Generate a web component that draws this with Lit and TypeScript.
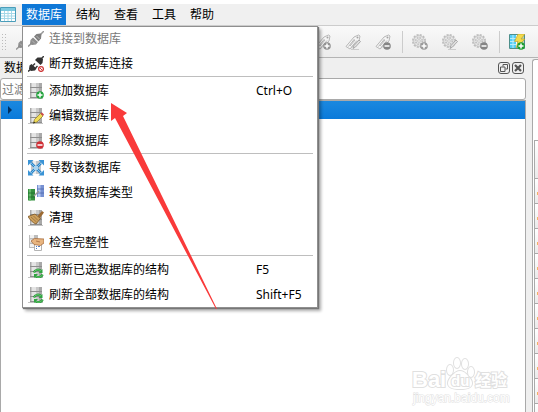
import { LitElement, html, svg, css, nothing } from "lit";
import { customElement, property } from "lit/decorators.js";

const rack = svg`
  <path d="M0 15.5h15" stroke="#c4c4c4"/>
  <path d="M2 0h12v15H2z" fill="#9a9a9a"/>
  <path d="M2 0h12v4H2zM2 5h12v4H2zM2 10h12v4H2z" fill="#a9a9a9"/>
  <path d="M3 0h8v4H3zM3 5h8v4H3zM3 10h8v4H3z" fill="#c8c8c8"/>
  <path d="M4 0h4v4H4zM4 5h4v4H4zM4 10h4v4H4z" fill="#e4e4e4"/>
  <path d="M2 4.5h12M2 9.5h12M2 14.5h12" stroke="#8e8e8e"/>`;
const badge = (fill: string, plus: boolean) => svg`
  <circle cx="12" cy="12" r="3.8" fill=${fill}/>
  <path d=${plus ? "M9.5 12h5M12 9.5v5" : "M9.5 12h5"} stroke="#fff" stroke-width="1.5"/>`;
const pencil = svg`
  <path d="M5.5 15l1-3.5 6-6 2.5 2.5-6 6z" fill="#f0dd58" stroke="#8d7526" stroke-width=".7"/>
  <path d="M12.5 5.5L15 8l1-1.5-2-2z" fill="#d04a4a"/><path d="M5 15.5l1-2 1.2 1.2z" fill="#222"/>`;
const refresh = svg`
  <path d="M6 10.5c1-3 5-3.500 7-1.500M14.500 12.5c-1 3-5 3.500-7 1.500" fill="none" stroke="#27923a" stroke-width="2.4"/>
  <path d="M6 10.5c1-3 5-3.500 7-1.500M14.500 12.5c-1 3-5 3.500-7 1.500" fill="none" stroke="#6ed873"/>
  <path d="M14.5 7v4H10.500zM6 16v-4h4z" fill="#2fa540"/>`;
const tag = svg`
  <path d="M1 12.5L9 3l4.5-2L15 2l-1 5-9 8z" fill="#f4f4f4" stroke="#b8b8b8"/>
  <path d="M3.5 12.5l6-7.5M6 13.5l6-7M5 12l5-6" stroke="#b8b8b8" fill="none"/>
  <circle cx="12.5" cy="3.5" r="1" fill="#a2a2a2"/>`;
const gear = svg`
  <circle cx="7" cy="7" r="6" fill="none" stroke="#bcbcbc" stroke-width="2" stroke-dasharray="2 1.14"/>
  <circle cx="7" cy="7" r="5.3" fill="#e6e6e6" stroke="#c4c4c4" stroke-width=".8"/>
  <circle cx="7" cy="7" r="3.3" fill="none" stroke="#bdbdbd" stroke-width="1.5" stroke-dasharray="1.5 1.1"/>
  <circle cx="7" cy="7" r="1.3" fill="#fff" stroke="#aaa" stroke-width=".6"/>`;
const grayPencil = svg`<path d="M6 15.5h8" stroke="#ccc"/>
  <path d="M8 14.5l1-3 5-5.5 1.5 1.5-5 5.5z" fill="#e2e2e2" stroke="#9a9a9a" stroke-width=".8"/>`;

const icons = {
  table: svg`<path d="M.5 .5h15v14H.5z" fill="#fff" stroke="#4a9dba"/><path d="M1 1h14v3H1z" fill="#7cc9e0"/>
    <path d="M1 6.500h14M1 9h14M1 11.500h14M4.500 4V14M8 4V14M11.500 4V14" stroke="#a5d8e8"/>`,
  plug: svg`<path d="M0 15.5l4-3.5M12 4l4-4" stroke="#999" stroke-width="1.5"/>
    <path d="M2 13l.5-4L5 6.5 10 11l-2 2.5-4 .5z" fill="#8d8d8d"/>
    <path d="M6 5.5L8.5 3l4-.5 1 1-.5 4-2.5 3z" fill="#7f7f7f"/>
    <path d="M4 9.5l3 3M8.5 5l3 3" stroke="#b5b5b5"/>`,
  unplug: svg`<path d="M0 15.5l3-2.500M13 3l3-3" stroke="#3a3a3a" stroke-width="1.5"/>
    <path d="M1 13l.5-3.500L3.500 8l5 4.500L7 14.5l-4 .5z" fill="#333"/>
    <path d="M7 4l2.500-2.500H13L15 3l-.5 4-2 2z" fill="#333"/>
    <path d="M5 9.5l2-2M7.5 12l2-2" stroke="#333" stroke-width="1.4"/>
    <circle cx="13" cy="13" r="2.4" fill="#fff" stroke="#cf3b3b" stroke-width="1.3"/><path d="M11.5 11.5l3 3" stroke="#cf3b3b"/>`,
  add: svg`${rack}${badge("#22a33c", true)}`,
  edit: svg`${rack}${pencil}`,
  remove: svg`${rack}${badge("#cf2f35", false)}`,
  exportDb: svg`<path d="M3 1h10v13H3z" fill="#c3c7cb"/><path d="M5 1h3v13H5z" fill="#ececec"/>
    <path d="M3 3l10 10M13 3L3 13" stroke="#2f86c6" stroke-width="2.5"/><path d="M3 3l10 10M13 3L3 13" stroke="#7cc0ee"/>
    <path d="M0 0h5.5L0 5.5zM16 0v5.5L10.5 0zM0 15.5V10l5.5 5.5zM16 15.5h-5.5L16 10z" fill="#3a94d6"/>
    <path d="M6 6h4v4H6z" fill="#a8d5f2"/>`,
  convert: svg`<path d="M0 4h7v11.5H0z" fill="#35913f"/><path d="M1 4h2v11.5H1z" fill="#62b869"/><path d="M0 8h7M0 12h7" stroke="#1f6a2b" stroke-width=".8"/>
    <path d="M9 0h7v12H9z" fill="#7791d2"/><path d="M10 0h2.5v12H10z" fill="#b6c7f0"/><path d="M9 4h7M9 8h7" stroke="#4d68ac" stroke-width=".8"/>
    <path d="M6 11l5-5" stroke="#999" stroke-width="1.5"/>`,
  clean: svg`${rack}<path d="M9.5 6l4.500-5 2 1.500L12 8z" fill="#9c6a32"/><path d="M0 6.5l7-2.500 5.500 4.500L8 14C5 13 2 10 0 6.500z" fill="#cda05c" stroke="#7b5527" stroke-width=".8"/>
    <path d="M3 7l5.5 5M5.5 6l4.500 4.500" stroke="#8d6636" stroke-width=".7"/>`,
  check: svg`<path d="M1 0h9v13H1z" fill="#bcbcbc"/><path d="M2 0h4v3H2zM2 4.5h4v3H2zM2 9h4v3H2z" fill="#f2f2f2"/>
    <path d="M6.5 7.5h7v8h-7z" fill="#fff" stroke="#b4b4b4"/><path d="M8 11.5h1M8 13.5h1M10 11.5h2" stroke="#557dc2"/>
    <path d="M3 6l3.500-2.500L16 4v4l-3.500 2.500L6 9.500z" fill="#e8b580" stroke="#a66c3d" stroke-width=".8"/>
    <path d="M8 6l4 1" stroke="#a66c3d" stroke-width=".8"/>`,
  refresh: svg`${rack}${refresh}`,
  tagAdd: svg`${tag}${badge("#929292", true)}`,
  tagEdit: svg`${tag}${grayPencil}`,
  tagRemove: svg`${tag}${badge("#858585", false)}`,
  gearAdd: svg`${gear}${badge("#9a9a9a", true)}`,
  gearEdit: svg`${gear}${grayPencil}`,
  gearRemove: svg`${gear}${badge("#858585", false)}`,
  tableAdd: svg`<path d="M.5 .5h15v14H.5z" fill="#fff" stroke="#4d8f8b"/><path d="M1 1h6v13H1z" fill="#55cdf5"/>
    <path d="M1 4.5h6M1 7.5h6M1 10.5h6M4 1v13" stroke="#b8ecfc"/><path d="M8 1h7v13H8z" fill="#b9d3b0"/>
    <path d="M9 0h7l-4 5h4l-9 9 2-6.500H5.500z" fill="#f4da4a" stroke="#b39b2a" stroke-width=".6"/>
    ${badge("#1d9e2f", true)}`,
};
type IconName = keyof typeof icons;
const icon = (name: IconName) =>
  html`<svg class="icon" viewBox="0 0 16 16" aria-hidden="true">${icons[name]}</svg>`;

type Tool = [IconName, string];
const tagTools: Tool[] = [["tagAdd", "添加"], ["tagEdit", "编辑"], ["tagRemove", "移除"]];
const gearTools: Tool[] = [["gearAdd", "添加"], ["gearEdit", "编辑"], ["gearRemove", "移除"]];
const tool = ([name, label]: Tool) => html`<button aria-label=${label}>${icon(name)}</button>`;

type Entry = { icon: IconName; label: string; key?: string; disabled?: boolean } | null;
const entries: Entry[] = [
  { icon: "plug", label: "连接到数据库", disabled: true },
  { icon: "unplug", label: "断开数据库连接" },
  null,
  { icon: "add", label: "添加数据库", key: "Ctrl+O" },
  { icon: "edit", label: "编辑数据库" },
  { icon: "remove", label: "移除数据库" },
  null,
  { icon: "exportDb", label: "导数该数据库" },
  { icon: "convert", label: "转换数据库类型" },
  { icon: "clean", label: "清理" },
  { icon: "check", label: "检查完整性" },
  null,
  { icon: "refresh", label: "刷新已选数据库的结构", key: "F5" },
  { icon: "refresh", label: "刷新全部数据库的结构", key: "Shift+F5" },
];

const shared = css`
  * { box-sizing: border-box; }
  button { font: inherit; color: inherit; border: 0; padding: 0; background: none; }
  .icon { width: 16px; height: 16px; flex: none; display: block; }
`;

@customElement("drop-menu")
export class DropMenu extends LitElement {
  @property({ attribute: false }) entries: Entry[] = [];
  static styles = [shared, css`
    :host { display: block; background: #fff; border: 1px solid #8f8f8f; border-top: 0;
      box-shadow: inset 0 1px #8f8f8f, 1px 1px 1px #777, 3px 3px 3px #0005; }
    .item { display: grid; grid-template-columns: 16px 1fr 58px; column-gap: 5px; align-items: center;
      width: 100%; height: 25px; padding: 0 3px 0 5px; text-align: left; white-space: nowrap; }
    .item:disabled { color: #787878; }
    hr { margin: 0 4px 1px; border: 0; height: 1px; background: #bebebe; }
  `];
  render() {
    return html`<div role="menu">${this.entries.map((e) => e
      ? html`<button class="item" role="menuitem" ?disabled=${e.disabled}>
          ${icon(e.icon)}<span>${e.label}</span>${e.key ? html`<span>${e.key}</span>` : nothing}
        </button>`
      : html`<hr>`)}</div>`;
  }
}

@customElement("app-root")
export class AppRoot extends LitElement {
  static styles = [shared, css`
    :host { display: flex; flex-direction: column; position: relative; min-height: 100vh; overflow: hidden;
      padding-top: 4px; background: #fff; color: #000; font: 12px/16px "Noto Sans", "Noto Sans CJK SC", sans-serif; }
    .menubar { display: flex; align-items: center; height: 22px; background: #f0f0f0; border-bottom: 1px solid #ccc; }
    .menubar .icon { margin-right: 6px; }
    .menu { height: 100%; padding: 0 4px; margin-right: 6px; }
    .open { background: #0f78d7; color: #fff; }
    .toolbar { display: flex; align-items: center; height: 32px; background: linear-gradient(#f9f9f9, #ececec);
      border-bottom: 1px solid #b4b4b4; }
    .grip { width: 5px; height: 18px; margin: 0 10px 0 1px; background: radial-gradient(circle, #bbb 1px, transparent 1px) 0 0 / 3px 3px; }
    .tools { display: flex; gap: 14px; }
    .tools.far { margin-left: 283px; }
    .rule { width: 1px; height: 22px; margin: 0 9px 0 11px; background: #ccc; }
    .body { flex: 1; display: flex; background: #efefef; }
    .dock { flex: 1; min-width: 0; display: flex; flex-direction: column; }
    .title { display: flex; align-items: center; height: 20px; padding: 0 2px 0 4px; gap: 2px; }
    .title span { flex: 1; }
    .tiny, .tiny svg { display: block; width: 12px; height: 12px; }
    .filter { width: 100%; height: 22px; padding: 0 1px; border: 1px solid #a9a9a9; border-radius: 3px;
      font: inherit; color: #777; background: #fff; outline: 0; }
    .filter::placeholder { color: #777; opacity: 1; }
    .tree { flex: 1; background: #fff; border: 1px solid #a9a9a9; border-bottom: 0; }
    .row { height: 18px; background: linear-gradient(#1b88df, #0a7ada); padding: 4px 6px; }
    .row svg { display: block; width: 6px; height: 10px; }
    .side { contain: size; width: 6px; margin: 1px 0 0 6px; background: #fff; border: solid #a9a9a9; border-width: 1px 0 0 1px;
      border-radius: 3px 0 0 0; padding: 80px 0 0 1px; overflow: hidden; }
    .cell { height: 25px; border: solid #aaa; border-width: 1px 0 0 1px; background: linear-gradient(#fff, #eaeaea); }
    .cell.tall { height: 38px; }
    .cell i { display: block; width: 1px; height: 3px; margin: 13px 0 0 auto; background: #f2b366; }
    drop-menu { position: absolute; left: 22px; top: 26px; width: 296px; }
    .arrow { position: absolute; left: 100px; top: 95px; width: 120px; height: 216px; pointer-events: none; }
    .mark { position: absolute; right: 26px; bottom: 8px; width: 102px; height: 54px; pointer-events: none; }
    .mark text { font-family: "Liberation Sans", "Noto Sans CJK SC", sans-serif; }
  `];
  render() {
    return html`
      <nav class="menubar">
        ${icon("table")}
        ${["数据库", "结构", "查看", "工具", "帮助"].map((m, i) =>
          html`<button class="menu ${i ? "" : "open"}">${m}</button>`)}
      </nav>
      <div class="toolbar">
        <div class="grip"></div>
        <button aria-label="连接到数据库">${icon("plug")}</button>
        <div class="tools far">${tagTools.map(tool)}</div>
        <div class="rule"></div>
        <div class="tools">${gearTools.map(tool)}</div>
        <div class="rule"></div>
        <button aria-label="添加">${icon("tableAdd")}</button>
      </div>
      <main class="body">
        <section class="dock">
          <header class="title">
            <span>数据库</span>
            <button class="tiny" aria-label="浮动"><svg viewBox="0 0 12 12" fill="none" stroke="#555">
              <rect x=".5" y=".5" width="11" height="11" rx="2.5"/><path d="M5 4.5v-2h4.5v4.5h-2M2.5 5h4.5v4.5H2.5z"/></svg></button>
            <button class="tiny" aria-label="关闭"><svg viewBox="0 0 12 12" fill="none" stroke="#555">
              <rect x=".5" y=".5" width="11" height="11" rx="2.5"/><path d="M3 3l6 6M9 3L3 9" stroke-width="2.2"/></svg></button>
          </header>
          <input class="filter" aria-label="过滤" placeholder="过滤">
          <div class="tree">
            <div class="row"><svg viewBox="0 0 6 10"><path d="M1 1l4 4-4 4z" fill="#022f5e"/></svg></div>
          </div>
        </section>
        <aside class="side">
          <div class="cell tall"></div>
          ${Array.from({ length: 10 }, () => html`<div class="cell"><i></i></div>`)}
        </aside>
      </main>
      <svg class="mark" viewBox="0 0 102 54" fill="#fff" stroke="#e0e0e0" stroke-width="2" paint-order="stroke">
        <text x="2" y="33" font-size="22" font-weight="700">Bai</text>
        <path d="M50 17c5 0 12 8 12 12s-3 6-12 6-12-2-12-6 7-12 12-12z"/>
        <ellipse cx="40" cy="16" rx="3" ry="5"/><ellipse cx="47" cy="9" rx="3" ry="5"/>
        <ellipse cx="55" cy="10" rx="3" ry="5"/><ellipse cx="61" cy="18" rx="3" ry="5"/>
        <text x="41" y="32" font-size="15" font-weight="700">du</text>
        <text x="65" y="32" font-size="16" font-weight="700">经验</text>
        <text x="3" y="48" font-size="12" stroke-width="1">jingyan.baidu.com</text>
      </svg>
      <drop-menu .entries=${entries}></drop-menu>
      <svg class="arrow" viewBox="0 0 120 216"><path d="M11 8v18l4-3 101 191h1L23 21l4-3z" fill="#f93a3a"/></svg>
    `;
  }
}
